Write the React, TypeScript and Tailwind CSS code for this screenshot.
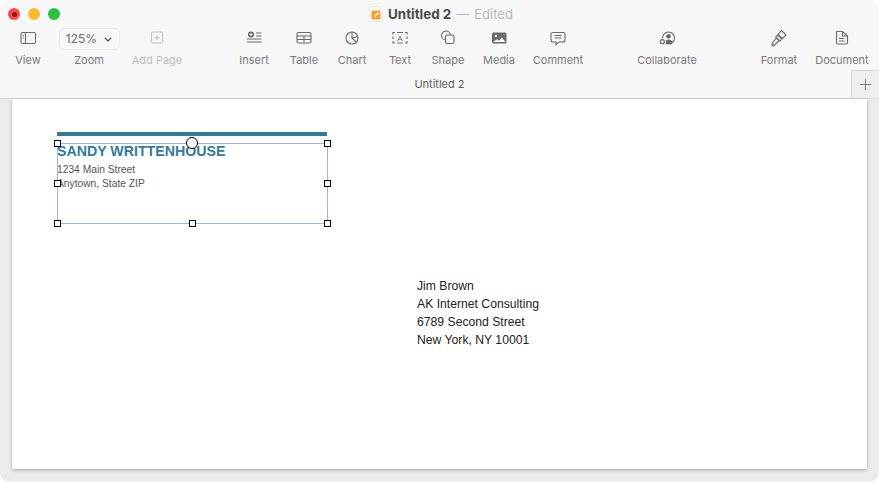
import React from 'react';

const ui = { fontFamily: 'Inter, "Liberation Sans", sans-serif' };
const doc = { fontFamily: '"Liberation Sans", Arial, sans-serif' };

const Svg: React.FC<{ children: React.ReactNode; className?: string }> = ({ children, className = 'text-[#6b6b6b]' }) => (
  <svg width="24" height="20" viewBox="0 0 24 20" fill="none" stroke="currentColor" strokeWidth="1.1" className={className}>
    {children}
  </svg>
);

const ViewIcon = () => (
  <Svg>
    <rect x="5" y="3.500" width="14.500" height="11" rx="1.500" />
    <path d="M9.500 3.500v11" />
    <path d="M6.700 6.500h1.200M6.700 9h1.200" />
  </Svg>
);
const AddPageIcon = () => (
  <Svg className="text-[#c4c4c4]">
    <rect x="6.500" y="3" width="11" height="11" rx="1.500" />
    <path d="M12 6v5M9.500 8.500h5" />
  </Svg>
);
const InsertIcon = () => (
  <Svg>
    <circle cx="9" cy="5.500" r="3" fill="currentColor" stroke="none" />
    <path d="M9 4v3M7.500 5.500h3" stroke="#f7f7f8" />
    <path d="M14 4h5.500M14 7h5.500M5 10h14.500M5 13h14.500" />
  </Svg>
);
const TableIcon = () => (
  <Svg>
    <rect x="5" y="3.500" width="14" height="10.500" rx="1.500" />
    <path d="M5 7h14M5 10.500h14M12 7v7" />
  </Svg>
);
const ChartIcon = () => (
  <Svg>
    <circle cx="12" cy="9" r="6" />
    <path d="M12 3v6l4.200 4.200M12 9l5.800-1.500" />
  </Svg>
);
const TextIcon = () => (
  <Svg>
    <path d="M7 3.500H5v2M17 3.500h2v2M7 14H5v-2M17 14h2v-2M5 7.500V10M19 7.500V10M9 3.500h6M9 14h6" />
    <text x="12" y="11.500" textAnchor="middle" fontSize="8" fill="currentColor" stroke="none" style={doc}>A</text>
  </Svg>
);
const ShapeIcon = () => (
  <Svg>
    <circle cx="10" cy="6.500" r="4.500" />
    <rect x="9.500" y="6" width="8.500" height="8.500" rx="1.500" fill="#f7f7f8" />
  </Svg>
);
const MediaIcon = () => (
  <Svg>
    <rect x="5" y="3.500" width="14.500" height="11" rx="1.500" fill="currentColor" stroke="none" />
    <circle cx="9" cy="7" r="1.200" fill="#f7f7f8" stroke="none" />
    <path d="M6 13l4-2.800 2 1.300 3-3 3.500 4.500z" fill="#f7f7f8" stroke="none" />
  </Svg>
);
const CommentIcon = () => (
  <Svg>
    <path d="M7 3.500h10a2 2 0 0 1 2 2v5.500a2 2 0 0 1-2 2h-4l-3 2.500v-2.500H7a2 2 0 0 1-2-2V5.500a2 2 0 0 1 2-2z" />
    <path d="M8.500 6.500h7M8.500 9h7" />
  </Svg>
);
const CollabIcon = () => (
  <Svg>
    <circle cx="13.500" cy="9" r="6" />
    <circle cx="13.500" cy="7.200" r="2.300" fill="currentColor" stroke="none" />
    <path d="M9.500 13.500c.6-2.200 2-3 4-3s3.400.8 4 3c-1 1-2.400 1.500-4 1.500s-3-.5-4-1.500z" fill="currentColor" stroke="none" />
    <circle cx="7.300" cy="12.700" r="3.200" fill="currentColor" stroke="#f7f7f8" />
    <path d="M7.300 11v3.400M5.600 12.700H9" stroke="#f7f7f8" />
  </Svg>
);
const FormatIcon = () => (
  <Svg>
    <path d="M14.500 1.500L19 6l-3.500 3.500L11 5.500z" />
    <path d="M10.500 6l4.500 4-2 2-4.300-4z" />
    <path d="M9.300 9l2.700 2.700-4.800 4.800c-.6.500-1.400.500-1.900 0-.6-.6-.6-1.400-.1-2z" />
    <circle cx="6.300" cy="15" r=".7" fill="currentColor" stroke="none" />
  </Svg>
);
const DocumentIcon = () => (
  <Svg>
    <path d="M7 2.500h5.500L17.500 7v6.500A1.500 1.500 0 0 1 16 15H8a1.500 1.500 0 0 1-1.500-1.500V3a.5.5 0 0 1 .5-.5z" />
    <path d="M12.500 2.500V7h5M9 9.500h5.500M9 12h5.500" />
  </Svg>
);

const Tool: React.FC<{ label: string; icon: React.ReactNode; className: string; dim?: boolean }> = ({ label, icon, className, dim }) => (
  <div className={`flex flex-col items-center shrink-0 ${className}`}>
    <div className="h-5 flex items-center justify-center">{icon}</div>
    <span className={`mt-[4px] text-[11px] leading-[14px] whitespace-nowrap ${dim ? 'text-[#bdbdbd]' : 'text-[#7a7a7a]'}`}>{label}</span>
  </div>
);

const Handle: React.FC<{ className: string }> = ({ className }) => (
  <div className={`absolute w-[7px] h-[7px] bg-white border border-black ${className}`} />
);

export default function App() {
  return (
    <div className="w-[879px] h-[482px] bg-white overflow-hidden" style={ui}>
      <div className="w-full h-full flex flex-col bg-[#ebebeb] rounded-[10px] overflow-hidden">
        {/* title bar + toolbar */}
        <div className="h-[99px] shrink-0 bg-[#f7f7f8] border-b border-[#d8d8d8] relative flex flex-col">
          <div className="h-[28px] shrink-0 relative flex items-center">
            <div className="flex gap-2 ml-2">
              <div className="w-3 h-3 rounded-full bg-[#fb4b47] flex items-center justify-center">
                <div className="w-[5px] h-[5px] rounded-full bg-[#8c1a14]" />
              </div>
              <div className="w-3 h-3 rounded-full bg-[#fdb92c]" />
              <div className="w-3 h-3 rounded-full bg-[#29c33f]" />
            </div>
            <div className="ml-[309px] flex items-center">
              <svg width="14" height="16" viewBox="0 0 14 16" className="shrink-0">
                <path d="M1 .5h8.500L13.500 4.500V15a.5.5 0 0 1-.5.5H1a.5.5 0 0 1-.5-.5V1A.5.5 0 0 1 1 .5z" fill="#fbfbfb" stroke="#e6e6e6" />
                <rect x="2.500" y="4.500" width="9" height="9" rx="1" fill="#f5a02a" />
                <path d="M5.500 11l4-4.500" stroke="#fff" strokeWidth="1.300" />
              </svg>
              <span className="ml-[5px] text-[13.400px] font-bold leading-4 text-[#4a4a4a]">Untitled 2</span>
              <span className="ml-[5px] text-[13px] leading-4 text-[#b8b8b8]">—</span>
              <span className="ml-[5px] text-[13px] leading-4 text-[#b8b8b8]">Edited</span>
            </div>
          </div>
          <div className="h-[42px] shrink-0 flex items-start pt-px">
            <Tool label="View" icon={<ViewIcon />} className="w-10 ml-2" />
            <div className="flex flex-col items-center w-[62px] ml-[10px] shrink-0">
              <div className="h-[22px] w-[61px] -mt-[1px] rounded-[5px] border border-[#ececec] flex items-center justify-center gap-[7px] text-[12px] text-[#6f6f6f]">
                <span>125%</span>
                <svg width="8" height="5" viewBox="0 0 8 5" fill="none" stroke="#5f5f5f" strokeWidth="1.300"><path d="M.8.8 4 4 7.200.8" /></svg>
              </div>
              <span className="mt-[3px] text-[11px] leading-[14px] text-[#7a7a7a]">Zoom</span>
            </div>
            <Tool label="Add Page" icon={<AddPageIcon />} className="w-[60px] ml-[7px]" dim />
            <Tool label="Insert" icon={<InsertIcon />} className="w-10 ml-[47px]" />
            <Tool label="Table" icon={<TableIcon />} className="w-10 ml-[10px]" />
            <Tool label="Chart" icon={<ChartIcon />} className="w-10 ml-2" />
            <Tool label="Text" icon={<TextIcon />} className="w-10 ml-2" />
            <Tool label="Shape" icon={<ShapeIcon />} className="w-10 ml-2" />
            <Tool label="Media" icon={<MediaIcon />} className="w-10 ml-[11px]" />
            <Tool label="Comment" icon={<CommentIcon />} className="w-[54px] ml-[12px]" />
            <Tool label="Collaborate" icon={<CollabIcon />} className="w-[64px] ml-[50px]" />
            <Tool label="Format" icon={<FormatIcon />} className="w-10 ml-[60px]" />
            <Tool label="Document" icon={<DocumentIcon />} className="w-[56px] ml-[15px]" />
          </div>
          <div className="flex-1 relative flex items-center justify-center">
            <span className="text-[11px] leading-[14px] text-[#5f5f5f]">Untitled 2</span>
            <div className="absolute right-0 top-0 bottom-0 w-[28px] bg-[#efefef] border-l border-t border-[#d8d8d8] flex items-center justify-center">
              <svg width="11" height="11" viewBox="0 0 11 11" stroke="#7a7a7a" strokeWidth="1"><path d="M5.500 0v11M0 5.500h11" /></svg>
            </div>
          </div>
        </div>

        {/* canvas */}
        <div className="flex-1 px-3 pb-[13px] min-h-0 flex">
          <div className="flex-1 bg-white shadow-[0_1px_3px_rgba(0,0,0,0.3)] relative" style={doc}>
            <div className="absolute left-[45px] top-[33px] w-[270px] h-1 bg-[#34799b]" />
            <div className="absolute left-[45px] top-[43px] w-[271px] text-[#34799b]">
              <div className="text-[14.200px] font-bold leading-[18px]">SANDY WRITTENHOUSE</div>
              <div className="mt-[3px] text-[10.250px] leading-[14px] text-[#555555]">1234 Main Street</div>
              <div className="text-[10.250px] leading-[14px] text-[#555555]">Anytown, State ZIP</div>
            </div>
            {/* selection box */}
            <div className="absolute left-[45px] top-[44px] w-[271px] h-[81px] border border-[#8fb9ea]">
              <Handle className="-left-[4px] -top-[4px]" />
              <Handle className="-right-[4px] -top-[4px]" />
              <Handle className="-left-[4px] top-[36px]" />
              <Handle className="-right-[4px] top-[36px]" />
              <Handle className="-left-[4px] -bottom-[4px]" />
              <Handle className="left-[131px] -bottom-[4px]" />
              <Handle className="-right-[4px] -bottom-[4px]" />
              <div className="absolute left-[128px] -top-[7px] w-3 h-3 rounded-full bg-white border border-black" />
            </div>
            <div className="absolute left-[405px] top-[178px] text-[12.200px] leading-[18px] text-[#222222]">
              <div>Jim Brown</div>
              <div>AK Internet Consulting</div>
              <div>6789 Second Street</div>
              <div>New York, NY 10001</div>
            </div>
          </div>
        </div>
      </div>
    </div>
  );
}
